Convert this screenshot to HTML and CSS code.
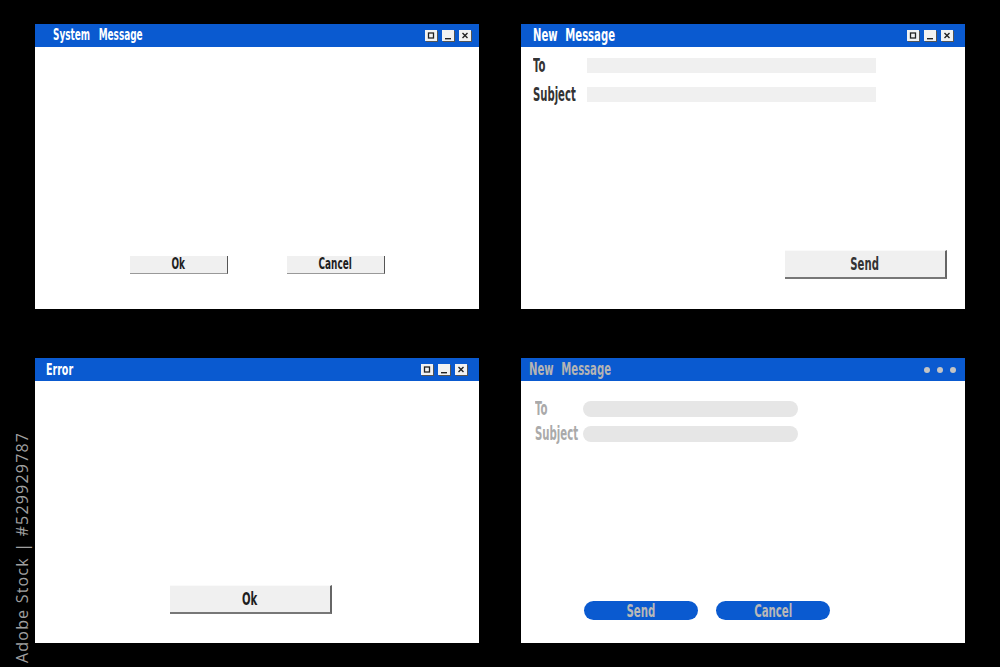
FILE: index.html
```html
<!DOCTYPE html>
<html>
<head>
<meta charset="utf-8">
<link rel="stylesheet" href="styles.css">
</head>
<body>
<div class="grid">
  <div class="win">
    <div class="bar">
      <span class="title t1"><span class="c">System<span class="sp"></span>Message</span></span>
      <div class="ctrls">
        <span class="ctl"><svg width="12" height="11" viewBox="0 0 12 11"><rect x="3.5" y="3" width="5" height="5" fill="none" stroke="#222" stroke-width="1.3"/></svg></span>
        <span class="ctl"><svg width="12" height="11" viewBox="0 0 12 11"><rect x="3" y="8" width="6" height="1.4" fill="#222"/></svg></span>
        <span class="ctl"><svg width="12" height="11" viewBox="0 0 12 11"><path d="M3.5 3 L8.5 8 M8.5 3 L3.5 8" stroke="#222" stroke-width="1.4"/></svg></span>
      </div>
    </div>
    <div class="body b1">
      <div class="btnrow">
        <span class="btn small"><span class="c cc">Ok</span></span>
        <span class="btn small"><span class="c cc">Cancel</span></span>
      </div>
    </div>
  </div>

  <div class="win">
    <div class="bar bar-wide">
      <span class="title t2"><span class="c">New<span class="sp2"></span>Message</span></span>
      <div class="ctrls">
        <span class="ctl"><svg width="12" height="11" viewBox="0 0 12 11"><rect x="3.5" y="3" width="5" height="5" fill="none" stroke="#222" stroke-width="1.3"/></svg></span>
        <span class="ctl"><svg width="12" height="11" viewBox="0 0 12 11"><rect x="3" y="8" width="6" height="1.4" fill="#222"/></svg></span>
        <span class="ctl"><svg width="12" height="11" viewBox="0 0 12 11"><path d="M3.5 3 L8.5 8 M8.5 3 L3.5 8" stroke="#222" stroke-width="1.4"/></svg></span>
      </div>
    </div>
    <div class="body b2">
      <div class="row"><span class="lbl"><span class="c">To</span></span><span class="field"></span></div>
      <div class="row"><span class="lbl"><span class="c">Subject</span></span><span class="field"></span></div>
      <div class="spacer"></div>
      <div class="sendrow"><span class="btn big"><span class="c cc">Send</span></span></div>
    </div>
  </div>

  <div class="win">
    <div class="bar bar-wide">
      <span class="title t3"><span class="c">Error</span></span>
      <div class="ctrls">
        <span class="ctl"><svg width="12" height="11" viewBox="0 0 12 11"><rect x="3.5" y="3" width="5" height="5" fill="none" stroke="#222" stroke-width="1.3"/></svg></span>
        <span class="ctl"><svg width="12" height="11" viewBox="0 0 12 11"><rect x="3" y="8" width="6" height="1.4" fill="#222"/></svg></span>
        <span class="ctl"><svg width="12" height="11" viewBox="0 0 12 11"><path d="M3.5 3 L8.5 8 M8.5 3 L3.5 8" stroke="#222" stroke-width="1.4"/></svg></span>
      </div>
    </div>
    <div class="body b3">
      <div class="spacer"></div>
      <div class="okrow"><span class="btn big"><span class="c cc">Ok</span></span></div>
    </div>
  </div>

  <div class="win">
    <div class="bar bar4">
      <span class="title t4"><span class="c">New<span class="sp2"></span>Message</span></span>
      <div class="dots"><span class="dot"></span><span class="dot"></span><span class="dot"></span></div>
    </div>
    <div class="body b4">
      <div class="row4"><span class="lbl4"><span class="c">To</span></span><span class="pill"></span></div>
      <div class="row4"><span class="lbl4"><span class="c">Subject</span></span><span class="pill"></span></div>
      <div class="spacer"></div>
      <div class="btnrow4">
        <span class="bbtn"><span class="c cc">Send</span></span>
        <span class="bbtn"><span class="c cc">Cancel</span></span>
      </div>
    </div>
  </div>
</div>
<div class="stock">Adobe Stock | #529929787</div>
</body>
</html>
```

FILE: styles.css
```css
html, body {
  margin: 0;
  padding: 0;
  background: #000;
}
body {
  width: 1000px;
  height: 667px;
  overflow: hidden;
  font-family: "DejaVu Sans", sans-serif;
  font-stretch: condensed;
  position: relative;
}
.grid {
  display: grid;
  grid-template-columns: 444px 444px;
  grid-template-rows: 285px 285px;
  column-gap: 42px;
  row-gap: 49px;
  padding: 24px 0 0 35px;
}
.win {
  display: flex;
  flex-direction: column;
  background: #fff;
}
.c {
  display: inline-block;
  transform: scaleX(var(--sx, 0.66));
  transform-origin: 0 50%;
  white-space: nowrap;
  font-weight: bold;
}
.cc {
  transform-origin: 50% 50%;
}
.bar {
  height: 23px;
  background: #0a5ad0;
  display: flex;
  align-items: center;
  justify-content: space-between;
  padding: 0 8px 0 0;
  flex: none;
}
.bar-wide {
  padding-right: 12px;
}
.title {
  color: #fff;
  line-height: 23px;
  white-space: nowrap;
  display: block;
  width: 150px;
}
.t1 { margin-left: 18px; font-size: 15px; }
.t2 { margin-left: 12px; font-size: 17.5px; --sx: 0.64; }
.t3 { margin-left: 11px; font-size: 16px; }
.t4 { margin-left: 8px; font-size: 17.5px; --sx: 0.64; color: #b4b4b4; }
.sp { display: inline-block; width: 13px; }
.sp2 { display: inline-block; width: 12px; }
.ctrls {
  display: flex;
  gap: 5px;
}
.ctl {
  width: 12px;
  height: 11px;
  background: #f2f2f2;
  box-shadow: 1px 1px 0 #555;
  display: block;
}
.ctl svg { display: block; }
.dots {
  display: flex;
  gap: 7px;
  padding-right: 1px;
}
.dot {
  width: 6px;
  height: 6px;
  border-radius: 50%;
  background: #c4c4c4;
}
.body {
  flex: 1;
  display: flex;
  flex-direction: column;
}
.b1 {
  padding-top: 209px;
}
.btnrow {
  display: flex;
  justify-content: center;
  gap: 59px;
}
.btn {
  background: #f0f0f0;
  color: #1e1e1e;
  display: flex;
  justify-content: center;
  align-items: center;
}
.small {
  width: 97px;
  height: 17px;
  font-size: 15px;
  line-height: 17px;
  border-right: 1px solid #555;
  border-bottom: 1px solid #999;
}
.big {
  width: 160px;
  height: 26px;
  line-height: 26px;
  font-size: 17px;
  border-right: 2px solid #666;
  border-bottom: 2px solid #777;
  border-top: 1px solid #fafafa;
}
.big .c { color: #333; }
.b2 {
  padding: 11px 18px 30px 12px;
}
.row {
  display: flex;
  align-items: center;
  height: 15px;
  margin-bottom: 14px;
}
.lbl {
  width: 54px;
  color: #333;
  font-size: 19px;
  line-height: 15px;
  --sx: 0.59;
}
.field {
  width: 289px;
  height: 15px;
  background: #f0f0f0;
}
.spacer { flex: 1; }
.sendrow {
  display: flex;
  justify-content: flex-end;
}
.b3 {
  padding: 0 0 29px 135px;
}
.b3 .big .c { color: #1e1e1e; }
.okrow { display: flex; }
.b4 {
  padding: 20px 0 23px 15px;
}
.row4 {
  display: flex;
  align-items: center;
  height: 16px;
  margin-bottom: 9px;
}
.lbl4 {
  width: 48px;
  color: #aaa;
  font-size: 19.5px;
  line-height: 16px;
  margin-left: -1px;
  --sx: 0.58;
}
.pill {
  width: 215px;
  height: 16px;
  border-radius: 8px;
  background: #e6e6e6;
}
.btnrow4 {
  display: flex;
  gap: 18px;
  padding-left: 48px;
}
.bbtn {
  width: 114px;
  height: 19px;
  line-height: 19px;
  border-radius: 10px;
  background: #0a5ad0;
  color: #b8b8b8;
  font-size: 18px;
  --sx: 0.63;
  display: flex;
  justify-content: center;
  align-items: center;
}
.stock {
  position: absolute;
  left: 13px;
  top: 663px;
  transform-origin: 0 0;
  transform: rotate(-90deg);
  color: #a0a0a0;
  font-family: "Open Sans", "DejaVu Sans", sans-serif;
  font-stretch: normal;
  font-size: 16px;
  letter-spacing: 1.2px;
  line-height: 18px;
  white-space: nowrap;
}
```
